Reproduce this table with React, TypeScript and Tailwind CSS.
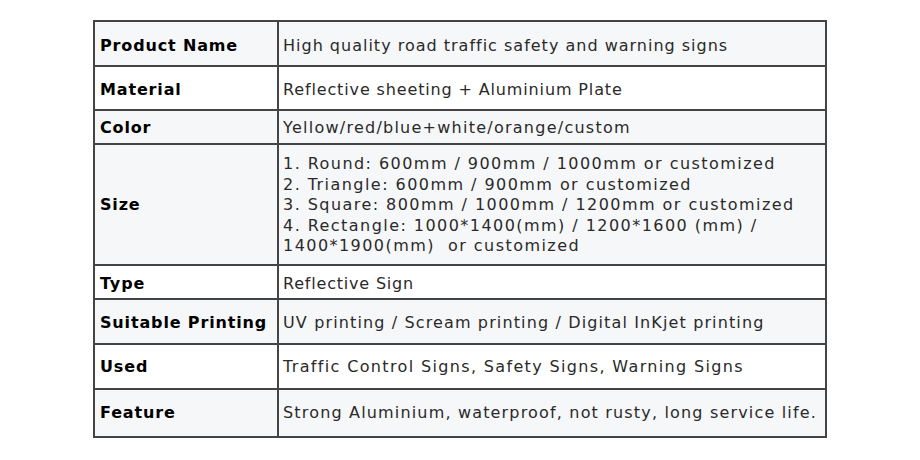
import React from "react";

const rows: { label: string; value: React.ReactNode; h: string; bg: string; tr: string; pt: string }[] = [
  { label: "Product Name", value: "High quality road traffic safety and warning signs", h: "h-[45px]", bg: "bg-[#f6f7f9]", tr: "tracking-[1px]", pt: "pt-[6px]" },
  { label: "Material", value: "Reflective sheeting + Aluminium Plate", h: "h-[44px]", bg: "bg-white", tr: "tracking-[0.86px]", pt: "pt-[4px]" },
  { label: "Color", value: "Yellow/red/blue+white/orange/custom", h: "h-[34px]", bg: "bg-[#f6f7f9]", tr: "tracking-[1.25px]", pt: "pt-[2px]" },
  {
    label: "Size",
    value: (
      <>
        1. Round: 600mm / 900mm / 1000mm or customized
        <br />
        2. Triangle: 600mm / 900mm or customized
        <br />
        3. Square: 800mm / 1000mm / 1200mm or customized
        <br />
        4. Rectangle: 1000*1400(mm) / 1200*1600 (mm) /
        <br />
        1400*1900(mm)&nbsp; or customized
      </>
    ),
    h: "h-[121px]",
    bg: "bg-[#f6f7f9]",
    tr: "tracking-[1.45px]",
    pt: "pt-[2px]",
  },
  { label: "Type", value: "Reflective Sign", h: "h-[34px]", bg: "bg-white", tr: "tracking-[0.8px]", pt: "pt-[4px]" },
  { label: "Suitable Printing", value: "UV printing / Scream printing / Digital InKjet printing", h: "h-[45px]", bg: "bg-[#f6f7f9]", tr: "tracking-[1.13px]", pt: "pt-[4px]" },
  { label: "Used", value: "Traffic Control Signs, Safety Signs, Warning Signs", h: "h-[45px]", bg: "bg-white", tr: "tracking-[1.35px]", pt: "pt-[2px]" },
  { label: "Feature", value: "Strong Aluminium, waterproof, not rusty, long service life.", h: "h-[48px]", bg: "bg-[#f6f7f9]", tr: "tracking-[1.17px]", pt: "pt-0" },
];

export default function App() {
  return (
    <div className="w-[920px] h-[460px] bg-white pt-[20px] pl-[93px]">
      <table
        className="w-[734px] border-collapse border-2 border-[#444] text-[16px] leading-[20.5px]"
        style={{ fontFamily: '"DejaVu Sans", Verdana, sans-serif' }}
      >
        <tbody>
          {rows.map((r) => (
            <tr key={r.label} className={`${r.h} ${r.bg}`}>
              <td className={`w-[184px] border-2 border-[#444] pl-[5px] font-bold text-black align-middle whitespace-nowrap tracking-[0.85px] ${r.pt}`}>
                {r.label}
              </td>
              <td className={`border-2 border-[#444] pl-[4px] text-[#2a2a2a] align-middle whitespace-nowrap ${r.tr} ${r.pt}`}>
                {r.value}
              </td>
            </tr>
          ))}
        </tbody>
      </table>
    </div>
  );
}
